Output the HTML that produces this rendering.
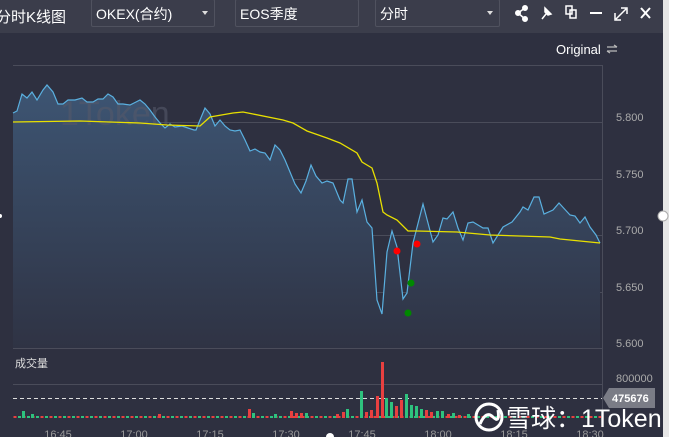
<!DOCTYPE html>
<html><head><meta charset="utf-8"><style>
html,body{margin:0;padding:0;width:681px;height:437px;overflow:hidden;background:#2e3040;font-family:"Liberation Sans","Noto Sans CJK SC",sans-serif}
.hdr{position:absolute;left:0;top:0;width:663px;height:33px;background:#3b3d4b}
.t{position:absolute;color:#fff;font-size:15px;top:6px}
.box{position:absolute;top:-1px;height:26px;border:1px solid #50525f;border-radius:2px;background:#3b3d4b}
.box span{position:absolute;left:4px;top:4px;color:#fff;font-size:14px}
.arr{position:absolute;right:6px;top:11px;width:0;height:0;border-left:3px solid transparent;border-right:3px solid transparent;border-top:4px solid #ddd}
.side{position:absolute;left:663px;top:0;width:18px;height:437px;background:#fff}
.side i{position:absolute;left:0;top:0;width:6px;height:437px;background:#e6e6e6}
</style></head><body>
<div class="hdr"></div>
<div class="t" style="left:-4px">分时K线图</div>
<div class="box" style="left:91px;width:122px"><span>OKEX(合约)</span><div class="arr"></div></div>
<div class="box" style="left:235px;width:122px"><span>EOS季度</span></div>
<div class="box" style="left:375px;width:123px"><span>分时</span><div class="arr"></div></div>
<svg style="position:absolute;left:0;top:0" width="663" height="437">
<g stroke="#fff" stroke-width="2" fill="#fff">
<circle cx="518" cy="13" r="2"/><circle cx="525" cy="8" r="2"/><circle cx="525" cy="19" r="2"/><path d="M518 13L525 8M518 13L525 19" stroke-width="1.5"/>
<path d="M542 19L546 14M545 8L551 14L548 15L545 12Z" stroke-width="1.5"/>
<rect x="566" y="6" width="6" height="8" fill="none" stroke-width="1.5"/><rect x="570" y="10" width="6" height="8" fill="none" stroke-width="1.5"/>
<path d="M590 13H602"/>
<path d="M616 19L626 9M621 8H627V14M615 13V20H621" fill="none" stroke-width="1.5"/>
<path d="M641 8L650 18M650 8L641 18"/>
</g>
<text x="556" y="54" fill="#fff" font-size="13" font-family="Liberation Sans">Original</text>
<path d="M607 47H617M614 45L617 47M607 51H617M610 53L607 51" stroke="#bbb" stroke-width="1.2" fill="none"/>
<g stroke="#4a4c5a" stroke-width="1">
<line x1="13" y1="65.5" x2="602" y2="65.5"/><line x1="13" y1="122.5" x2="602" y2="122.5"/><line x1="13" y1="179.5" x2="602" y2="179.5"/><line x1="13" y1="235.5" x2="602" y2="235.5"/><line x1="13" y1="292.5" x2="602" y2="292.5"/><line x1="13" y1="348.5" x2="602" y2="348.5"/><line x1="13" y1="384.5" x2="602" y2="384.5"/>
<line x1="602.5" y1="65" x2="602.5" y2="420"/>
</g>
<defs><linearGradient id="g" x1="0" y1="0" x2="0" y2="1"><stop offset="0" stop-color="#3d5573"/><stop offset="1" stop-color="#2f3344"/></linearGradient>
<pattern id="p" width="9" height="3" patternUnits="userSpaceOnUse"><rect x="0" width="3" height="3" fill="#2ec27e"/><rect x="4.5" width="3" height="3" fill="#e84040"/></pattern></defs>
<path fill="url(#g)" d="M13,113 17,111 22,94 27,98 32,92 37,100 43,90 47,85 53,92 58,104 63,104 68,100 75,100 82,98 87,102 93,102 98,99 103,99 108,94 113,97 118,104 123,104 130,105 136,102 140,100 145,104 150,110 155,117 160,123 165,128 170,124 175,127 182,126 188,128 194,130 196,130 200,120 205,108 210,114 215,126 220,120 225,126 230,130 235,131 240,130 245,140 250,151 255,149 260,152 265,153 270,160 275,145 280,150 285,160 290,172 295,184 301,193 306,181 311,165 316,176 322,183 327,181 333,183 340,200 343,203 348,179 352,179 357,212 362,200 367,222 372,228 377,300 382,314 387,252 392,231 397,247 403,299 407,293 413,243 423,204 433,242 438,235 443,218 447,219 453,212 458,228 463,240 468,223 473,222 478,225 483,228 488,228 493,243 503,227 512,222 520,212 523,207 528,210 534,197 539,197 544,214 553,210 559,203 570,215 575,216 580,223 585,217 590,227 596,235 600,243 L600,348 L13,348Z"/>
<text x="60" y="125" fill="#55596a" font-size="34" font-family="Liberation Sans" opacity="0.6">1Token</text>
<polyline fill="none" stroke="#5ab0e0" stroke-width="1.2" points="13,113 17,111 22,94 27,98 32,92 37,100 43,90 47,85 53,92 58,104 63,104 68,100 75,100 82,98 87,102 93,102 98,99 103,99 108,94 113,97 118,104 123,104 130,105 136,102 140,100 145,104 150,110 155,117 160,123 165,128 170,124 175,127 182,126 188,128 194,130 196,130 200,120 205,108 210,114 215,126 220,120 225,126 230,130 235,131 240,130 245,140 250,151 255,149 260,152 265,153 270,160 275,145 280,150 285,160 290,172 295,184 301,193 306,181 311,165 316,176 322,183 327,181 333,183 340,200 343,203 348,179 352,179 357,212 362,200 367,222 372,228 377,300 382,314 387,252 392,231 397,247 403,299 407,293 413,243 423,204 433,242 438,235 443,218 447,219 453,212 458,228 463,240 468,223 473,222 478,225 483,228 488,228 493,243 503,227 512,222 520,212 523,207 528,210 534,197 539,197 544,214 553,210 559,203 570,215 575,216 580,223 585,217 590,227 596,235 600,243"/>
<polyline fill="none" stroke="#e8e000" stroke-width="1.3" points="13,122 80,121 140,123 167,125 200,126 210,117 233,113 243,112 253,114 283,120 293,123 307,131 327,138 340,143 357,153 362,162 372,168 377,183 383,212 387,215 397,220 408,231 417,231 457,232 490,235 550,237 560,239 600,243"/>
<circle cx="397" cy="251" r="3.5" fill="#f00"/><circle cx="417" cy="244" r="3.5" fill="#f00"/>
<circle cx="411" cy="283" r="3.5" fill="#080"/><circle cx="408" cy="313" r="3.5" fill="#080"/>
<text x="15" y="367" fill="#ddd" font-size="11">成交量</text>
<line x1="13" y1="398.5" x2="602" y2="398.5" stroke="#ddd" stroke-dasharray="4,3"/>
<rect x="13" y="416" width="588" height="2" fill="url(#p)"/>
<g fill="#2ec27e"><rect x="22" y="411" width="3" height="7"/><rect x="31" y="414" width="3" height="4"/><rect x="252" y="413" width="3" height="5"/><rect x="274" y="414" width="3" height="4"/><rect x="305" y="413" width="3" height="5"/><rect x="346" y="409" width="3" height="9"/><rect x="360" y="391" width="3" height="27"/><rect x="385" y="398" width="3" height="20"/><rect x="390" y="402" width="3" height="16"/><rect x="405" y="394" width="3" height="24"/><rect x="410" y="405" width="3" height="13"/><rect x="415" y="406" width="3" height="12"/><rect x="420" y="409" width="3" height="9"/><rect x="436" y="411" width="3" height="7"/><rect x="441" y="411" width="3" height="7"/><rect x="452" y="413" width="3" height="5"/><rect x="467" y="414" width="3" height="4"/></g>
<g fill="#e84040"><rect x="158" y="414" width="3" height="4"/><rect x="248" y="409" width="3" height="9"/><rect x="290" y="411" width="3" height="7"/><rect x="295" y="413" width="3" height="5"/><rect x="300" y="413" width="3" height="5"/><rect x="336" y="414" width="3" height="4"/><rect x="342" y="412" width="3" height="6"/><rect x="365" y="412" width="3" height="6"/><rect x="370" y="410" width="3" height="8"/><rect x="376" y="396" width="3" height="22"/><rect x="381" y="362" width="3" height="56"/><rect x="395" y="406" width="3" height="12"/><rect x="400" y="400" width="3" height="18"/><rect x="425" y="410" width="3" height="8"/><rect x="430" y="412" width="3" height="6"/><rect x="447" y="414" width="3" height="4"/><rect x="458" y="415" width="3" height="3"/></g>
<g fill="#999" font-size="11" text-anchor="middle"><text x="58" y="438">16:45</text><text x="134" y="438">17:00</text><text x="210" y="438">17:15</text><text x="286" y="438">17:30</text><text x="362" y="438">17:45</text><text x="438" y="438">18:00</text><text x="514" y="438">18:15</text><text x="590" y="438">18:30</text></g>
<g fill="#aaa" font-size="11"><text x="616" y="121">5.800</text><text x="616" y="178">5.750</text><text x="616" y="234">5.700</text><text x="616" y="291">5.650</text><text x="616" y="347">5.600</text><text x="616" y="382">800000</text></g>
<path d="M609 388H655V408H609L603 398Z" fill="#7a7c86"/>
<text x="612" y="402" fill="#fff" font-size="11" font-weight="bold">475676</text>
<circle cx="330" cy="437" r="4" fill="#fff"/>
</svg>
<div class="side"><i></i></div>
<svg style="position:absolute;left:0;top:0" width="681" height="437">
<circle cx="663" cy="216" r="5" fill="#fff" stroke="#aaa"/><circle cx="0" cy="216" r="2" fill="#fff"/>
<circle cx="489" cy="417" r="13" fill="none" stroke="#fff" stroke-width="3"/>
<path d="M480 424Q486 410 493 417T498 410" fill="none" stroke="#fff" stroke-width="3"/>
<text x="506" y="427" fill="#fff" font-size="25" font-family="Liberation Sans,Noto Sans CJK SC,sans-serif">雪球：1Token</text>
</svg>
</body></html>
